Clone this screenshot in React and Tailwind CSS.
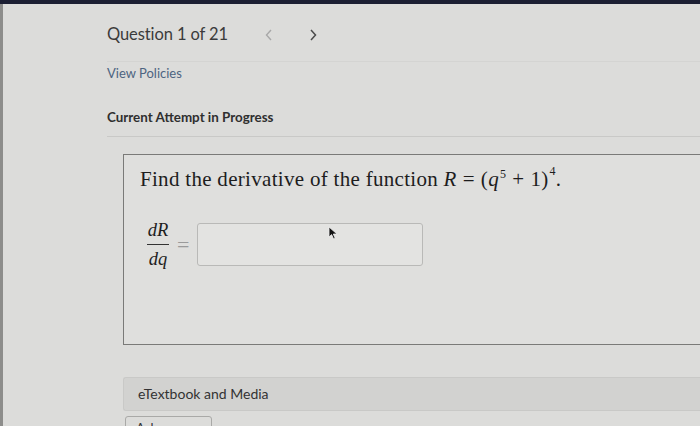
import React from 'react'

const ui = { fontFamily: 'Lato, "Open Sans", sans-serif' }
const tex = { fontFamily: '"Liberation Serif", "DejaVu Serif", serif' }

function Cursor() {
  return (
    <svg width="12" height="14" viewBox="0 0 12 14" className="absolute left-[130px] top-[2px]">
      <path d="M1 1 L1 11 L3.6 8.6 L5.6 13 L7.2 12.3 L5.3 8 L9 8 Z" fill="#111" stroke="#eee" strokeWidth="0.8" />
    </svg>
  )
}

export default function App() {
  return (
    <div
      className="w-[700px] h-[426px] overflow-hidden bg-[#dcdcda] border-t-[4px] border-[#1c1f33] relative"
      style={ui}
    >
      <div className="absolute left-0 top-0 bottom-0 w-[3px] bg-[#8d8d8b]" />
      <div className="pl-[107px]">
        <div className="flex items-center h-[58px] pt-[4px] border-b border-[#d4d4d2]">
          <span className="text-[16.5px] text-[#3b3b3b] tracking-[-0.1px]">Question 1 of 21</span>
          <svg width="12" height="14" viewBox="0 0 12 14" className="ml-[35px]">
            <path d="M8 2 L3.5 7 L8 12" fill="none" stroke="#a8a8a8" strokeWidth="1.4" />
          </svg>
          <svg width="12" height="14" viewBox="0 0 12 14" className="ml-[32px]">
            <path d="M4 2 L8.5 7 L4 12" fill="none" stroke="#4a4a4a" strokeWidth="1.5" />
          </svg>
        </div>
        <div className="mt-[2px] text-[13px] text-[#4d6481]">View Policies</div>
        <div className="mt-[23px] text-[13.4px] font-bold text-[#2f2f2f]">Current Attempt in Progress</div>
        <div className="mt-[9px] border-b border-[#c9c9c7]" />

        <div className="ml-[16px] mt-[17px] h-[191px] border-[1.5px] border-r-0 border-[#7a7a78] bg-[#dfdfdd] pl-[16px] pt-[9px]" style={tex}>
          <div className="text-[21px] text-[#1d1d1d] tracking-[0.3px] flex items-baseline whitespace-pre">
            <span>Find the derivative of the function </span>
            <i>R</i>
            <span className="mx-[6px]">=</span>
            <span>(</span>
            <i>q</i>
            <span className="text-[12px] ml-[1px] relative -top-[0.6em]">5</span>
            <span className="mx-[6px]">+</span>
            <span>1)</span>
            <span className="text-[12px] ml-[1px] relative -top-[0.85em]">4</span>
            <span>.</span>
          </div>
          <div className="flex items-center mt-[25px] ml-[7px]">
            <div className="flex flex-col items-center text-[#1d1d1d] text-[18.5px] leading-[20px]">
              <span className="italic">dR</span>
              <span className="w-[22px] border-t border-[#333] my-[4px]" />
              <span className="italic">dq</span>
            </div>
            <span className="ml-[8px] text-[22px] text-[#9a9a9a]">=</span>
            <div className="ml-[8px] w-[226px] h-[43px] border border-[#b9b9b7] rounded-[3px] bg-[#e3e3e1] relative">
              <Cursor />
            </div>
          </div>
        </div>

        <div className="ml-[16px] mt-[32px] h-[34px] rounded-l-[3px] bg-[#d2d2d0] border border-r-0 border-[#c9c9c7] flex items-center pl-[14px]">
          <span className="text-[14px] text-[#333]">eTextbook and Media</span>
        </div>
        <div className="ml-[18px] mt-[5px] w-[87px] h-[20px] border border-[#a9a9a7] rounded-[3px] pl-[10px] pt-[3px] leading-[14px]">
          <span className="text-[13px] text-[#333]">Ask...</span>
        </div>
      </div>
    </div>
  )
}
